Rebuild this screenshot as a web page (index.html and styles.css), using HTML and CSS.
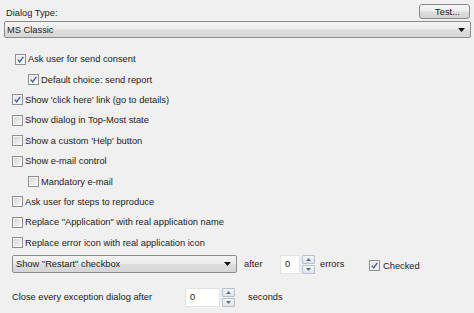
FILE: index.html
```html
<!DOCTYPE html>
<html lang="en">
<head>
    <meta charset="UTF-8">
    <title>Dialog Options</title>
    <link rel="stylesheet" href="styles.css">
</head>
<body>
    <div class="panel">
        <!-- Dialog type -->
        <div class="header">
            <span class="label">Dialog Type:</span>
            <button class="btn">Test...</button>
        </div>
        <div class="combo">
            <span>MS Classic</span>
            <svg class="arrow" width="7" height="4" viewBox="0 0 7 4"><path d="M0 0H7L3.5 4Z" fill="#111"/></svg>
        </div>

        <!-- Options -->
        <div class="options">
            <div class="row ind-ask"><span class="cb on"><svg width="9" height="9" viewBox="0 0 9 9"><path d="M1.8 4.6L3.7 6.9L7.3 1.9" fill="none" stroke="#4a5c98" stroke-width="1.4"/></svg></span>Ask user for send consent</div>
            <div class="row ind-sub"><span class="cb on"><svg width="9" height="9" viewBox="0 0 9 9"><path d="M1.8 4.6L3.7 6.9L7.3 1.9" fill="none" stroke="#4a5c98" stroke-width="1.4"/></svg></span>Default choice: send report</div>
            <div class="row"><span class="cb on"><svg width="9" height="9" viewBox="0 0 9 9"><path d="M1.8 4.6L3.7 6.9L7.3 1.9" fill="none" stroke="#4a5c98" stroke-width="1.4"/></svg></span>Show 'click here' link (go to details)</div>
            <div class="row"><span class="cb"></span>Show dialog in Top-Most state</div>
            <div class="row"><span class="cb"></span>Show a custom 'Help' button</div>
            <div class="row"><span class="cb"></span>Show e-mail control</div>
            <div class="row ind-sub"><span class="cb"></span>Mandatory e-mail</div>
            <div class="row"><span class="cb"></span>Ask user for steps to reproduce</div>
            <div class="row"><span class="cb"></span>Replace "Application" with real application name</div>
            <div class="row"><span class="cb"></span>Replace error icon with real application icon</div>
        </div>

        <!-- Restart -->
        <div class="restart">
            <div class="combo restart-combo">
                <span>Show "Restart" checkbox</span>
                <svg class="arrow" width="7" height="4" viewBox="0 0 7 4"><path d="M0 0H7L3.5 4Z" fill="#111"/></svg>
            </div>
            <span class="after">after</span>
            <div class="spin spin-errors">
                <span class="spin-input">0</span>
                <span class="spin-btns">
                    <span class="spin-btn"><svg width="5" height="3" viewBox="0 0 5 3"><path d="M0 3H5L2.5 0Z" fill="#5b6f8f"/></svg></span>
                    <span class="spin-btn"><svg width="5" height="3" viewBox="0 0 5 3"><path d="M0 0H5L2.5 3Z" fill="#5b6f8f"/></svg></span>
                </span>
            </div>
            <span class="errors">errors</span>
            <span class="row checked-row"><span class="cb on"><svg width="9" height="9" viewBox="0 0 9 9"><path d="M1.8 4.6L3.7 6.9L7.3 1.9" fill="none" stroke="#4a5c98" stroke-width="1.4"/></svg></span>Checked</span>
        </div>

        <!-- Auto close -->
        <div class="close-row">
            <span class="close-label">Close every exception dialog after</span>
            <div class="spin spin-seconds">
                <span class="spin-input">0</span>
                <span class="spin-btns">
                    <span class="spin-btn"><svg width="5" height="3" viewBox="0 0 5 3"><path d="M0 3H5L2.5 0Z" fill="#5b6f8f"/></svg></span>
                    <span class="spin-btn"><svg width="5" height="3" viewBox="0 0 5 3"><path d="M0 0H5L2.5 3Z" fill="#5b6f8f"/></svg></span>
                </span>
            </div>
            <span class="seconds">seconds</span>
        </div>
    </div>
</body>
</html>
```

FILE: styles.css
```css
* {
    margin: 0;
    padding: 0;
    box-sizing: border-box;
}

body {
    width: 474px;
    height: 313px;
    overflow: hidden;
    background: #f0f0f0;
    color: #1c1c1c;
    font-family: 'Liberation Sans', Arial, sans-serif;
    font-size: 9.3px;
}

.panel {
    padding: 4px 3px 0 4px;
}

.header {
    display: flex;
    justify-content: space-between;
    align-items: center;
    height: 17px;
}

.label {
    padding-left: 2px;
}

.btn {
    width: 51px;
    height: 15px;
    margin-right: 1px;
    margin-top: -2px;
    border: 1px solid #8a8a8a;
    border-radius: 3px;
    background: linear-gradient(#f6f6f6 0%, #ececec 48%, #dcdcdc 52%, #d4d4d4 100%);
    font-family: inherit;
    font-size: 9.3px;
    color: #1c1c1c;
    padding-left: 6px;
}

.combo {
    display: flex;
    align-items: center;
    justify-content: space-between;
    height: 17px;
    padding: 0 5px 0 2px;
    border: 1px solid #8c8c8c;
    border-radius: 2px;
    background: linear-gradient(#f4f4f4 0%, #ebebeb 48%, #dddddd 52%, #d6d6d6 100%);
}

.arrow {
    flex-shrink: 0;
}

.options {
    margin-top: 11px;
}

.row {
    display: flex;
    align-items: center;
    height: 20.4px;
    padding-left: 8px;
}

.row.ind-ask {
    padding-left: 11px;
}

.row.ind-sub {
    padding-left: 24px;
}

.cb {
    display: flex;
    align-items: center;
    justify-content: center;
    width: 11px;
    height: 11px;
    margin-right: 2px;
    flex-shrink: 0;
    border: 1px solid #8e8f8f;
    background: linear-gradient(135deg, #d2d2d2 0%, #e8e8e8 55%, #fafafa 100%);
    box-shadow: inset 0 0 0 1px #f4f4f4;
}

.cb.on {
    background: linear-gradient(135deg, #dfe3ea 0%, #eef0f4 60%, #fbfbfc 100%);
}

.restart {
    display: flex;
    align-items: center;
    margin-top: 2px;
    padding-left: 8px;
    height: 19px;
}

.restart-combo {
    width: 225px;
    height: 18px;
    padding-left: 3px;
}

.after {
    width: 36px;
    margin-left: 7px;
}

.spin {
    display: flex;
    height: 19px;
}

.spin-input {
    display: flex;
    align-items: center;
    padding-left: 4px;
    background: #fff;
    border: 1px solid #e2e2e2;
}

.spin-errors .spin-input {
    width: 20px;
}

.spin-seconds .spin-input {
    width: 35px;
}

.spin-btns {
    display: flex;
    flex-direction: column;
    justify-content: space-between;
    width: 13px;
    margin-left: 2px;
}

.spin-btn {
    display: flex;
    align-items: center;
    justify-content: center;
    height: 9px;
    border: 1px solid #b9c0c8;
    border-radius: 1px;
    background: linear-gradient(#f4f6f8, #dfe4ea);
}

.errors {
    margin-left: 5px;
    width: 49px;
}

.checked-row {
    padding-left: 0;
    margin-top: 3px;
}

.checked-row .cb {
    margin-right: 3px;
}

.close-row {
    display: flex;
    align-items: center;
    margin-top: 14px;
    padding-left: 8px;
    height: 19px;
}

.close-label {
    width: 173px;
}

.seconds {
    margin-left: 13px;
}
```
